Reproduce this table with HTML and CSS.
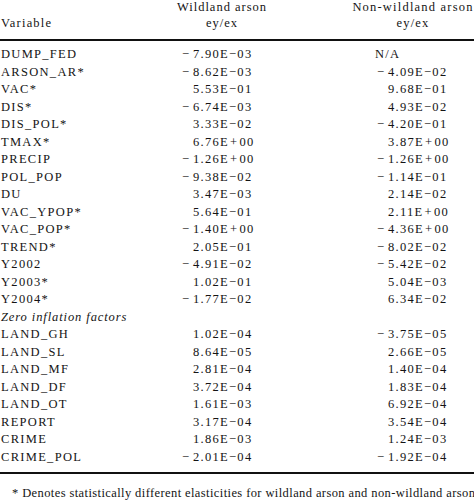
FILE: index.html
```html
<!DOCTYPE html>
<html>
<head>
<meta charset="utf-8">
<link rel="stylesheet" href="styles.css">
</head>
<body>
<div class="sheet">
  <div class="grid head">
    <div class="c1 hv">Variable</div>
    <div class="c2 hc"><span class="l1">Wildland arson</span><span class="l2">ey/ex</span></div>
    <div class="c3 hc"><span class="l1">Non-wildland arson</span><span class="l2">ey/ex</span></div>
  </div>
  <div class="rule"></div>
  <div class="grid body">
    <div class="c1">DUMP_FED</div><div class="c2"><span class="sg">−</span>7.90E−03</div><div class="c3 na">N/A</div>
    <div class="c1">ARSON_AR*</div><div class="c2"><span class="sg">−</span>8.62E−03</div><div class="c3"><span class="sg">−</span>4.09E−02</div>
    <div class="c1">VAC*</div><div class="c2"><span class="sg"></span>5.53E−01</div><div class="c3"><span class="sg"></span>9.68E−01</div>
    <div class="c1">DIS*</div><div class="c2"><span class="sg">−</span>6.74E−03</div><div class="c3"><span class="sg"></span>4.93E−02</div>
    <div class="c1">DIS_POL*</div><div class="c2"><span class="sg"></span>3.33E−02</div><div class="c3"><span class="sg">−</span>4.20E−01</div>
    <div class="c1">TMAX*</div><div class="c2"><span class="sg"></span>6.76E<span class="pl">+</span>00</div><div class="c3"><span class="sg"></span>3.87E<span class="pl">+</span>00</div>
    <div class="c1">PRECIP</div><div class="c2"><span class="sg">−</span>1.26E<span class="pl">+</span>00</div><div class="c3"><span class="sg">−</span>1.26E<span class="pl">+</span>00</div>
    <div class="c1">POL_POP</div><div class="c2"><span class="sg">−</span>9.38E−02</div><div class="c3"><span class="sg">−</span>1.14E−01</div>
    <div class="c1">DU</div><div class="c2"><span class="sg"></span>3.47E−03</div><div class="c3"><span class="sg"></span>2.14E−02</div>
    <div class="c1">VAC_YPOP*</div><div class="c2"><span class="sg"></span>5.64E−01</div><div class="c3"><span class="sg"></span>2.11E<span class="pl">+</span>00</div>
    <div class="c1">VAC_POP*</div><div class="c2"><span class="sg">−</span>1.40E<span class="pl">+</span>00</div><div class="c3"><span class="sg">−</span>4.36E<span class="pl">+</span>00</div>
    <div class="c1">TREND*</div><div class="c2"><span class="sg"></span>2.05E−01</div><div class="c3"><span class="sg">−</span>8.02E−02</div>
    <div class="c1">Y2002</div><div class="c2"><span class="sg">−</span>4.91E−02</div><div class="c3"><span class="sg">−</span>5.42E−02</div>
    <div class="c1">Y2003*</div><div class="c2"><span class="sg"></span>1.02E−01</div><div class="c3"><span class="sg"></span>5.04E−03</div>
    <div class="c1">Y2004*</div><div class="c2"><span class="sg">−</span>1.77E−02</div><div class="c3"><span class="sg"></span>6.34E−02</div>
    <div class="c1 sect">Zero inflation factors</div><div class="c2"></div><div class="c3"></div>
    <div class="c1">LAND_GH</div><div class="c2"><span class="sg"></span>1.02E−04</div><div class="c3"><span class="sg">−</span>3.75E−05</div>
    <div class="c1">LAND_SL</div><div class="c2"><span class="sg"></span>8.64E−05</div><div class="c3"><span class="sg"></span>2.66E−05</div>
    <div class="c1">LAND_MF</div><div class="c2"><span class="sg"></span>2.81E−04</div><div class="c3"><span class="sg"></span>1.40E−04</div>
    <div class="c1">LAND_DF</div><div class="c2"><span class="sg"></span>3.72E−04</div><div class="c3"><span class="sg"></span>1.83E−04</div>
    <div class="c1">LAND_OT</div><div class="c2"><span class="sg"></span>1.61E−03</div><div class="c3"><span class="sg"></span>6.92E−04</div>
    <div class="c1">REPORT</div><div class="c2"><span class="sg"></span>3.17E−04</div><div class="c3"><span class="sg"></span>3.54E−04</div>
    <div class="c1">CRIME</div><div class="c2"><span class="sg"></span>1.86E−03</div><div class="c3"><span class="sg"></span>1.24E−03</div>
    <div class="c1">CRIME_POL</div><div class="c2"><span class="sg">−</span>2.01E−04</div><div class="c3"><span class="sg">−</span>1.92E−04</div>
  </div>
  <div class="rule"></div>
  <p class="note">* Denotes statistically different elasticities for wildland arson and non-wildland arson</p>
</div>
</body>
</html>
```

FILE: styles.css
```css
html, body {
  margin: 0;
  padding: 0;
  background: #ffffff;
}
body {
  width: 474px;
  height: 504px;
  overflow: hidden;
}
.sheet {
  font-family: "Liberation Serif", "Times New Roman", Tinos, "DejaVu Serif", serif;
  font-size: 12.5px;
  letter-spacing: 1.3px;
  color: #141414;
  line-height: 17.5px;
}
.grid {
  display: grid;
  grid-template-columns: 162px 120px 192px;
}
.c1 {
  padding-left: 1px;
  white-space: nowrap;
}
.head .hv {
  align-self: end;
  letter-spacing: 1.2px;
}
.hc {
  text-align: center;
  white-space: nowrap;
}
.hc .l1 {
  display: block;
  line-height: 13px;
}
.hc .l2 {
  display: block;
  padding-top: 1px;
}
.head .c2 {
  letter-spacing: 1px;
}
.head .c3 {
  padding-left: 70px;
  letter-spacing: 1.2px;
}
.body .c2 {
  padding-left: 20px;
  white-space: nowrap;
}
.body .c3 {
  padding-left: 95px;
  white-space: nowrap;
}
.body .c3.na {
  padding-left: 93px;
}
.sg {
  display: inline-block;
  width: 11px;
}
.pl {
  margin: 0 1px;
}
.sect {
  font-style: italic;
  letter-spacing: 0.9px;
}
.rule {
  height: 2px;
  background: #111;
}
.head {
  padding-top: 1px;
  padding-bottom: 6.5px;
}
.body {
  padding-top: 5px;
  padding-bottom: 6px;
}
.note {
  margin: 0;
  padding-top: 11px;
  padding-left: 12px;
  white-space: nowrap;
  letter-spacing: 0.4px;
}
```
